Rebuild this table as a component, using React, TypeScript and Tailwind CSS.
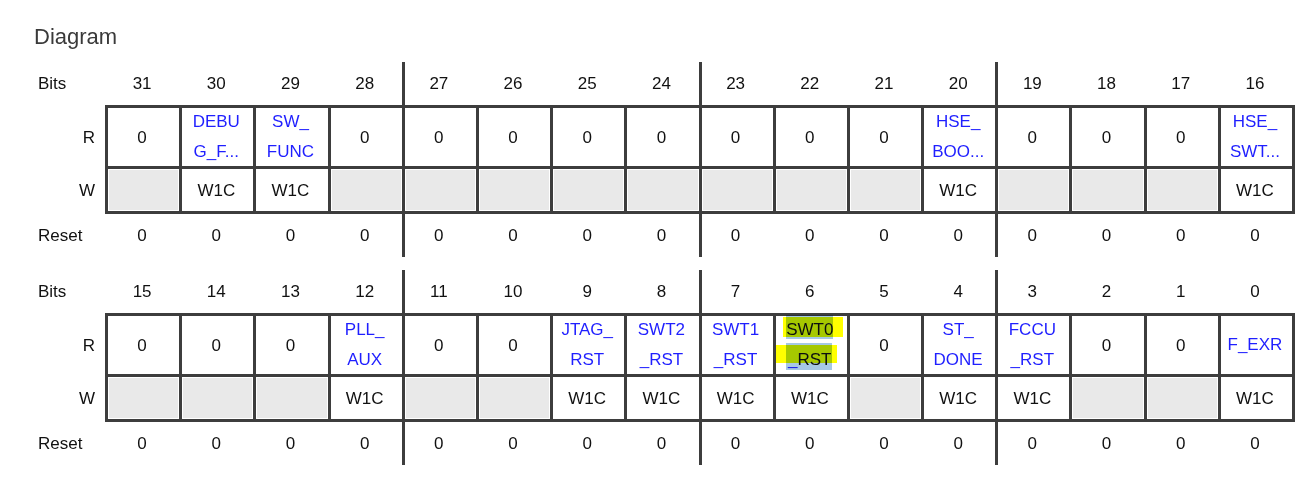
import React from 'react';

type Field = {
  bit: number;
  name?: string[];
  w1c?: boolean;
  mark?: boolean;
};

const LINE = 'bg-[#3d3d3d]';

const TOP: Field[] = [
  { bit: 31 },
  { bit: 30, name: ['DEBU', 'G_F...'], w1c: true },
  { bit: 29, name: ['SW_', 'FUNC'], w1c: true },
  { bit: 28 },
  { bit: 27 },
  { bit: 26 },
  { bit: 25 },
  { bit: 24 },
  { bit: 23 },
  { bit: 22 },
  { bit: 21 },
  { bit: 20, name: ['HSE_', 'BOO...'], w1c: true },
  { bit: 19 },
  { bit: 18 },
  { bit: 17 },
  { bit: 16, name: ['HSE_', 'SWT...'], w1c: true },
];

const BOTTOM: Field[] = [
  { bit: 15 },
  { bit: 14 },
  { bit: 13 },
  { bit: 12, name: ['PLL_', 'AUX'], w1c: true },
  { bit: 11 },
  { bit: 10 },
  { bit: 9, name: ['JTAG_', 'RST'], w1c: true },
  { bit: 8, name: ['SWT2', '_RST'], w1c: true },
  { bit: 7, name: ['SWT1', '_RST'], w1c: true },
  { bit: 6, name: ['SWT0', '_RST'], w1c: true, mark: true },
  { bit: 5 },
  { bit: 4, name: ['ST_', 'DONE'], w1c: true },
  { bit: 3, name: ['FCCU', '_RST'], w1c: true },
  { bit: 2 },
  { bit: 1 },
  { bit: 0, name: ['F_EXR'], w1c: true },
];

// highlighted field name (search hit + text selection on top)
function Marked() {
  return (
    <div className="flex flex-col items-center leading-[30px] text-[#111]">
      <span className="relative">
        <span className="absolute -left-[3px] -right-[10px] top-[2px] h-[20px] bg-[#ffff00]" />
        <span className="relative">SWT0</span>
        <span className="absolute left-0 right-0 top-0 h-[24px] bg-[#a6c8e4] mix-blend-multiply" />
      </span>
      <span className="relative">
        <span className="absolute -left-[12px] -right-[5px] top-0 h-[18px] bg-[#ffff00]" />
        <span className="relative">
          <span className="text-[#1f1fff]">_</span>RST
        </span>
        <span className="absolute -left-[2px] right-0 -top-[2px] h-[27px] bg-[#a6c8e4] mix-blend-multiply" />
      </span>
    </div>
  );
}

function ReadCell({ f }: { f: Field }) {
  if (f.mark) {
    return (
      <div className="bg-white flex items-center justify-center pr-[3px]">
        <Marked />
      </div>
    );
  }
  if (!f.name) {
    return <div className="bg-white flex items-center justify-center pr-[3px] text-[#111]">0</div>;
  }
  return (
    <div className="bg-white flex flex-col items-center justify-center pr-[3px] leading-[30px] text-[#1f1fff]">
      {f.name.map((line) => (
        <span key={line}>{line}</span>
      ))}
    </div>
  );
}

function WriteCell({ f }: { f: Field }) {
  if (!f.w1c) return <div className="bg-[#e9e9e9] ring-1 ring-inset ring-white" />;
  return <div className="bg-white flex items-center justify-center pr-[3px] text-[#111]">W1C</div>;
}

// number row above / reset row below, with the nibble dividers running through
function OpenRow({ label, fields, values }: { label: string; fields: Field[]; values: string[] }) {
  return (
    <div className="flex h-[43px]">
      <div className="w-[71px] pl-[4px] flex items-center text-[#111]">{label}</div>
      <div className="w-[1190px] grid grid-cols-16 gap-[3px] px-[3px]">
        {fields.map((f, i) => (
          <div
            key={f.bit}
            className={`flex items-center justify-center pr-[3px] text-[#111] ${
              i > 0 && i % 4 === 0 ? '-ml-[3px] border-l-[3px] border-[#3d3d3d]' : ''
            }`}
          >
            {values[i]}
          </div>
        ))}
      </div>
    </div>
  );
}

function Block({ fields }: { fields: Field[] }) {
  return (
    <div className="flex flex-col">
      <OpenRow label="Bits" fields={fields} values={fields.map((f) => String(f.bit))} />
      <div className="flex">
        <div className="w-[71px] flex flex-col pr-[10px] text-[#111] py-[3px] gap-[3px]">
          <div className="h-[58px] flex items-center justify-end">R</div>
          <div className="h-[42px] flex items-center justify-end">W</div>
        </div>
        <div className={`w-[1190px] ${LINE} p-[3px] grid grid-cols-16 grid-rows-[58px_42px] gap-[3px]`}>
          {fields.map((f) => (
            <ReadCell key={`r${f.bit}`} f={f} />
          ))}
          {fields.map((f) => (
            <WriteCell key={`w${f.bit}`} f={f} />
          ))}
        </div>
      </div>
      <OpenRow label="Reset" fields={fields} values={fields.map(() => '0')} />
    </div>
  );
}

export default function App() {
  return (
    <div className="w-[1316px] h-[486px] bg-white pl-[34px] pt-[24px] font-['Liberation_Sans',Arial,sans-serif] text-[17px] leading-none">
      <h2 className="text-[22px] leading-[26px] text-[#3a3a3a]">Diagram</h2>
      <div className="mt-[12px] flex flex-col gap-[13px]">
        <Block fields={TOP} />
        <Block fields={BOTTOM} />
      </div>
    </div>
  );
}
